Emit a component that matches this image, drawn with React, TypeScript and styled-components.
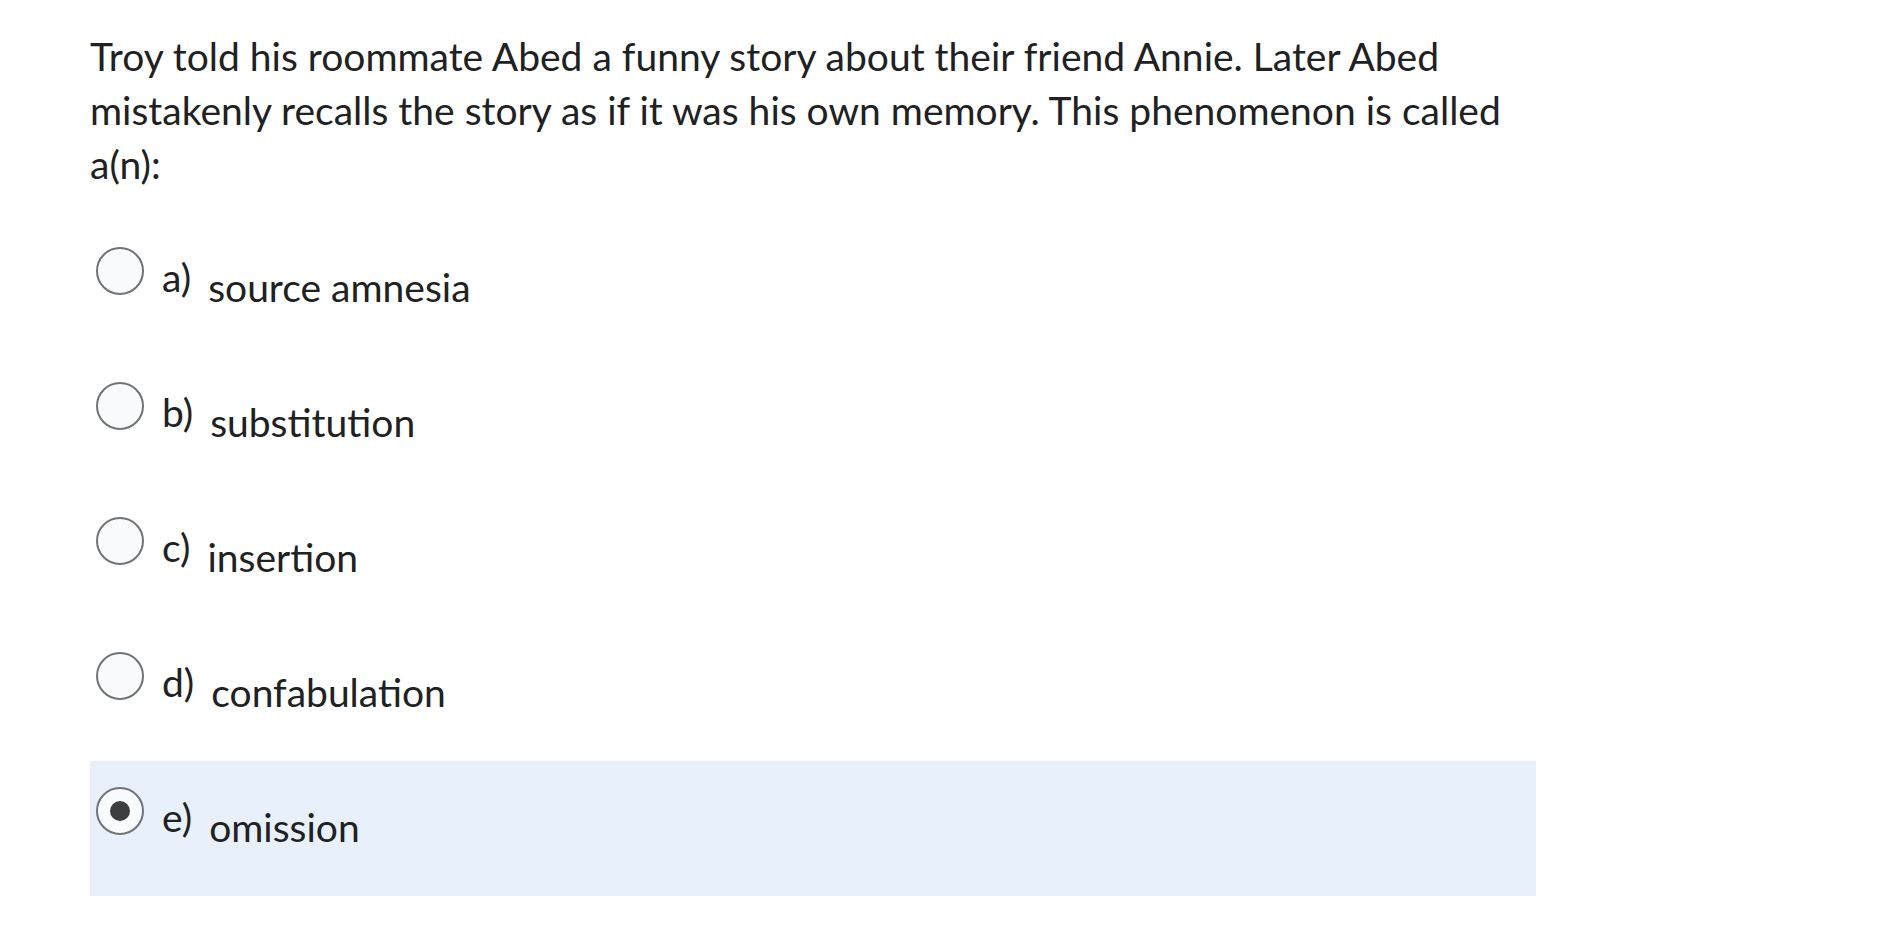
import styled, { createGlobalStyle } from 'styled-components'

const GlobalStyle = createGlobalStyle`
  body {
    margin: 0;
    background: #ffffff;
    color: #202122;
    font-family: Lato, "Open Sans", sans-serif;
  }
`

const Page = styled.main`
  width: 1446px;
  padding: 29px 0 0 90px;
`

const Question = styled.p`
  margin: 0 0 30px;
  font-size: 39px;
  line-height: 54px;
`

const Options = styled.div`
  display: flex;
  flex-direction: column;
`

const OptionRow = styled.label<{ $selected?: boolean }>`
  display: flex;
  align-items: flex-start;
  height: 135px;
  box-sizing: border-box;
  padding-left: 6px;
  background: ${({ $selected }) => ($selected ? '#e8f1fb' : 'transparent')};
  cursor: pointer;
`

const Radio = styled.span<{ $checked?: boolean }>`
  display: flex;
  align-items: center;
  justify-content: center;
  flex: none;
  width: 48px;
  height: 48px;
  margin-top: 26px;
  box-sizing: border-box;
  border: 2px solid #6f7378;
  border-radius: 50%;
  background: #fafbfe;

  &::after {
    content: '';
    display: ${({ $checked }) => ($checked ? 'block' : 'none')};
    width: 20px;
    height: 20px;
    border-radius: 50%;
    background: #3d3e42;
  }
`

const Letter = styled.span`
  margin: 29px 0 0 18px;
  font-size: 39px;
  line-height: 54px;
`

const OptionText = styled.span`
  margin: 39px 0 0 17px;
  font-size: 39px;
  line-height: 54px;
`

const OPTIONS = ['source amnesia', 'substitution', 'insertion', 'confabulation', 'omission']
const SELECTED = 4

export default function App() {
  return (
    <>
      <GlobalStyle />
      <Page>
        <Question>
          Troy told his roommate Abed a funny story about their friend Annie. Later Abed mistakenly recalls the
          story as if it was his own memory. This phenomenon is called a(n):
        </Question>

        <Options>
          {OPTIONS.map((option, i) => (
            <OptionRow key={option} $selected={i === SELECTED}>
              <Radio $checked={i === SELECTED} />
              <Letter>{String.fromCharCode(97 + i)})</Letter>
              <OptionText>{option}</OptionText>
            </OptionRow>
          ))}
        </Options>
      </Page>
    </>
  )
}
